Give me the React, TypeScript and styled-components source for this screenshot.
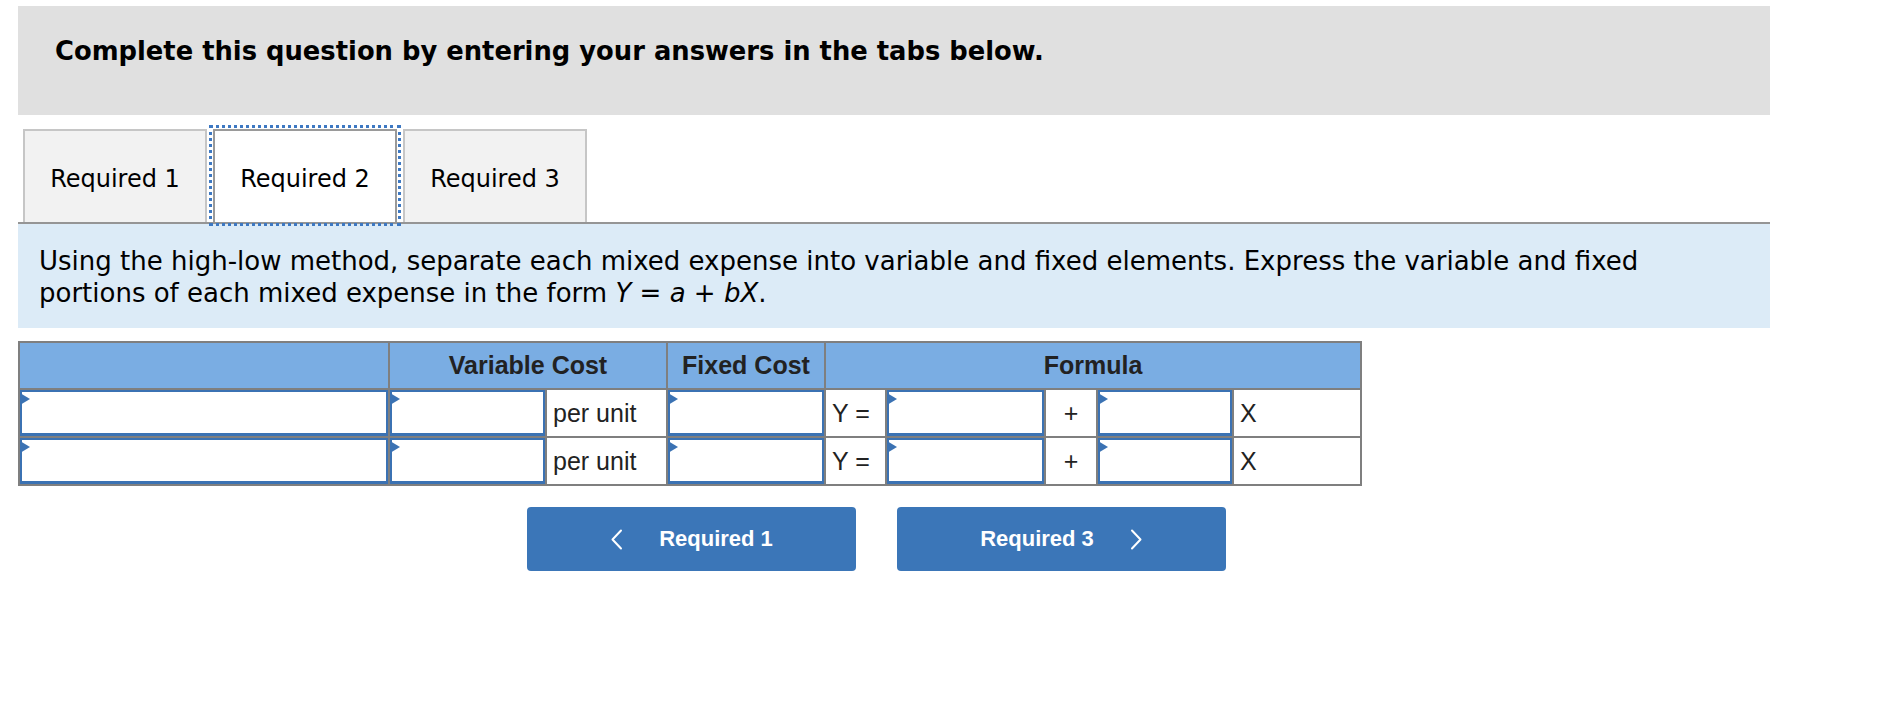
import React from "react";
import styled, { createGlobalStyle } from "styled-components";

const GlobalStyle = createGlobalStyle`
  html, body { margin: 0; padding: 0; background: #ffffff; }
  body { font-family: "DejaVu Sans", Verdana, sans-serif; color: #000; }
  * { box-sizing: border-box; }
`;

const Page = styled.div`
  width: 1770px;
  padding: 6px 0 40px 18px;
`;

const Banner = styled.div`
  height: 109px;
  background: #e0e0e0;
  padding: 30px 0 0 37px;
  font-weight: bold;
  font-size: 25.8px;
  line-height: 30px;
  color: #000;
`;

const TabList = styled.div`
  margin-top: 14px;
  display: flex;
  gap: 6px;
  padding-left: 5px;
  border-bottom: 2px solid #959595;
`;

const Tab = styled.div<{ $active?: boolean }>`
  width: 184px;
  height: 93px;
  padding-top: 5px;
  display: flex;
  align-items: center;
  justify-content: center;
  font-size: 24px;
  color: #000;
  background: ${(p) => (p.$active ? "#ffffff" : "#f2f2f2")};
  border: 2px solid ${(p) => (p.$active ? "#9a9a9a" : "#c6c6c6")};
  border-bottom: none;
  outline: ${(p) => (p.$active ? "3px dotted #3d78c2" : "none")};
  outline-offset: 1px;
  position: relative;
  z-index: ${(p) => (p.$active ? 1 : 0)};
`;

const Instructions = styled.div`
  background: #dcebf7;
  padding: 21px 21px 19px 21px;
  font-size: 26px;
  line-height: 32px;
  color: #000;
`;

const Table = styled.table`
  margin-top: 13px;
  width: 1342px;
  table-layout: fixed;
  border-collapse: collapse;
  font-family: "Liberation Sans", Arial, sans-serif;
  color: #222;
`;

const HeadCell = styled.th`
  height: 47px;
  background: #7aade3;
  border: 2px solid #7f7f7f;
  font-size: 25px;
  font-weight: bold;
  text-align: center;
  padding: 0;
  color: #222;
`;

const InputCell = styled.td`
  height: 48px;
  border: 2px solid #7f7f7f;
  padding: 0;
  background: #ffffff;
`;

const TextCell = styled.td<{ $align?: "left" | "center" }>`
  height: 48px;
  border: 2px solid #7f7f7f;
  padding: 0 6px;
  background: #ffffff;
  font-size: 25px;
  text-align: ${(p) => p.$align ?? "left"};
  color: #222;
  white-space: nowrap;
`;

const Field = styled.div`
  position: relative;
  height: 46px;
  &::before {
    content: "";
    position: absolute;
    left: 0;
    top: 3px;
    width: 0;
    height: 0;
    border-top: 6px solid transparent;
    border-bottom: 6px solid transparent;
    border-left: 10px solid #3b72b3;
  }
`;

const AnswerInput = styled.input`
  display: block;
  width: 100%;
  height: 100%;
  border: 2px solid #3b72b3;
  border-bottom-width: 3px;
  background: #ffffff;
  font-family: "Liberation Sans", Arial, sans-serif;
  font-size: 22px;
  padding: 0 8px;
  outline: none;
`;

const ButtonRow = styled.div`
  margin-top: 21px;
  display: flex;
  gap: 41px;
  padding-left: 509px;
`;

const NavButton = styled.button`
  width: 329px;
  height: 64px;
  border: none;
  border-radius: 4px;
  background: #3b76b8;
  color: #ffffff;
  font-family: "Liberation Sans", Arial, sans-serif;
  font-weight: bold;
  font-size: 22px;
  display: flex;
  align-items: center;
  justify-content: center;
  gap: 36px;
  cursor: pointer;
  padding: 0;
`;

const Chevron = ({ dir }: { dir: "left" | "right" }) => (
  <svg width="13" height="21" viewBox="0 0 13 21" fill="none">
    <polyline
      points={dir === "left" ? "11,1.5 2.5,10.5 11,19.5" : "2,1.5 10.5,10.5 2,19.5"}
      stroke="#ffffff"
      strokeWidth="2"
      strokeLinecap="round"
      strokeLinejoin="round"
    />
  </svg>
);

const Answer = () => (
  <Field>
    <AnswerInput type="text" />
  </Field>
);

const rows = [0, 1];

export default function App() {
  return (
    <>
      <GlobalStyle />
      <Page>
        <Banner>Complete this question by entering your answers in the tabs below.</Banner>
        <TabList>
          <Tab>Required 1</Tab>
          <Tab $active>Required 2</Tab>
          <Tab>Required 3</Tab>
        </TabList>
        <Instructions>
          Using the high-low method, separate each mixed expense into variable and fixed elements. Express the variable and fixed
          <br />
          portions of each mixed expense in the form <i>Y</i> = <i>a</i> + <i>bX</i>.
        </Instructions>
        <Table>
          <colgroup>
            <col style={{ width: 370 }} />
            <col style={{ width: 157 }} />
            <col style={{ width: 121 }} />
            <col style={{ width: 158 }} />
            <col style={{ width: 61 }} />
            <col style={{ width: 159 }} />
            <col style={{ width: 52 }} />
            <col style={{ width: 136 }} />
            <col style={{ width: 128 }} />
          </colgroup>
          <thead>
            <tr>
              <HeadCell />
              <HeadCell colSpan={2}>Variable Cost</HeadCell>
              <HeadCell>Fixed Cost</HeadCell>
              <HeadCell colSpan={5}>Formula</HeadCell>
            </tr>
          </thead>
          <tbody>
            {rows.map((r) => (
              <tr key={r}>
                <InputCell><Answer /></InputCell>
                <InputCell><Answer /></InputCell>
                <TextCell>per unit</TextCell>
                <InputCell><Answer /></InputCell>
                <TextCell>Y =</TextCell>
                <InputCell><Answer /></InputCell>
                <TextCell $align="center">+</TextCell>
                <InputCell><Answer /></InputCell>
                <TextCell>X</TextCell>
              </tr>
            ))}
          </tbody>
        </Table>
        <ButtonRow>
          <NavButton type="button">
            <Chevron dir="left" />
            <span>Required 1</span>
          </NavButton>
          <NavButton type="button">
            <span>Required 3</span>
            <Chevron dir="right" />
          </NavButton>
        </ButtonRow>
      </Page>
    </>
  );
}
